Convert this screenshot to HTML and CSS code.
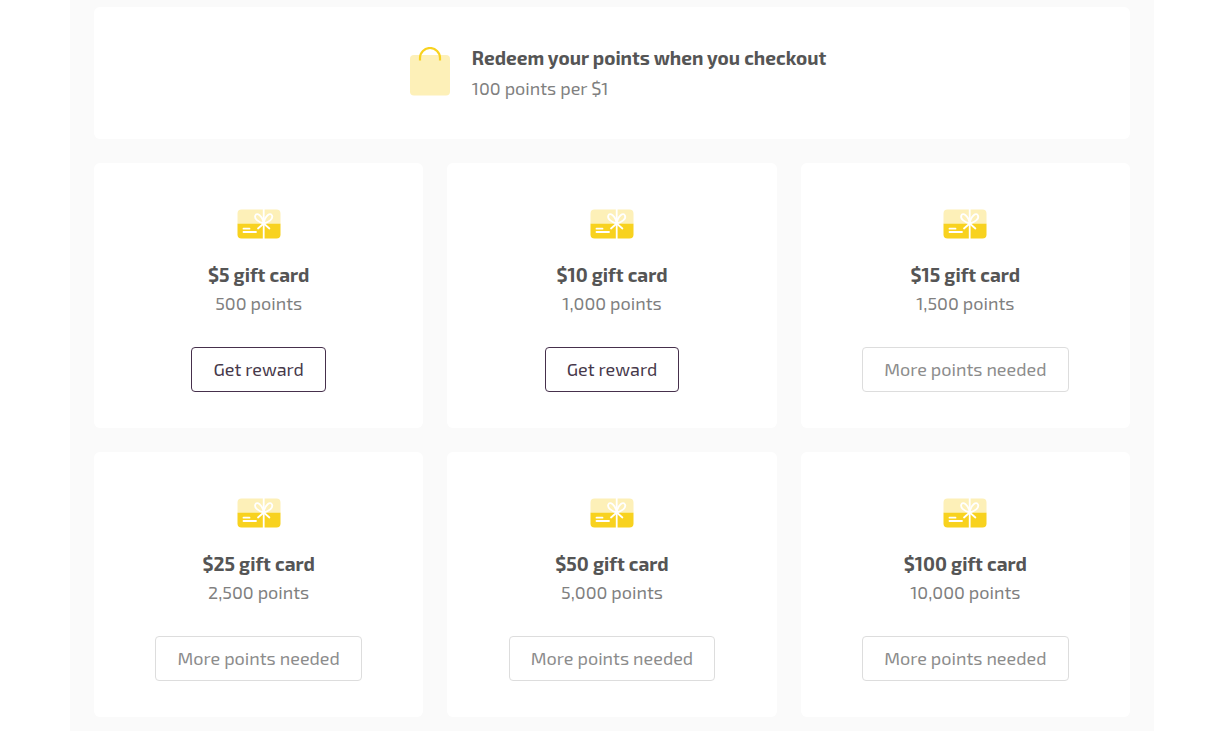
FILE: index.html
```html
<!DOCTYPE html>
<html lang="en">

<head>
  <meta charset="UTF-8">
  <meta name="viewport" content="width=device-width, initial-scale=1">
  <title>Rewards</title>
  <link rel="stylesheet" href="styles.css">
</head>

<body>

  <!-- shared gift card icon -->
  <svg class="sprite" aria-hidden="true">
    <symbol id="gift-card" viewBox="0 0 44 30">
      <path d="M4.500 .5h35a4 4 0 0 1 4 4V15H.5V4.500a4 4 0 0 1 4-4z" fill="#fdf0b8" />
      <path d="M.5 14.700h43v10.800a4 4 0 0 1-4 4h-35a4 4 0 0 1-4-4z" fill="#f8d21f" />
      <g fill="none" stroke="#fff" stroke-width="1.800" stroke-linecap="round" stroke-linejoin="round">
        <path d="M26.700 0v30" stroke-linecap="butt" />
        <path d="M26.700 14.500C22 13.500 17 10 18.300 6.500S25.700 6.500 26.700 14.500C27.700 6.500 33.500 3 35 6.500S31.500 13.500 26.700 14.500" />
        <path d="M26.700 14.500l-5.700 5M26.700 14.500l5.700 5" />
        <path d="M6.500 19.700h6M6.500 23h12.500" />
      </g>
    </symbol>
  </svg>

  <main class="rewards">
    <section class="card banner">
      <svg class="bag" viewBox="0 -1 40 52" aria-hidden="true">
        <rect y="7" width="40" height="40.500" rx="4" fill="#fdf0b8" />
        <path d="M10 12.500V10a10 10 0 0 1 20 0v2.500" fill="none" stroke="#f8d21f" stroke-width="2.200" />
      </svg>
      <div>
        <h2 class="title">Redeem your points when you checkout</h2>
        <p class="points">100 points per $1</p>
      </div>
    </section>

    <div class="grid">
      <section class="card reward">
        <svg class="icon" aria-hidden="true"><use href="#gift-card" /></svg>
        <h2 class="title">$5 gift card</h2>
        <p class="points">500 points</p>
        <button class="btn" type="button">Get reward</button>
      </section>
      <section class="card reward">
        <svg class="icon" aria-hidden="true"><use href="#gift-card" /></svg>
        <h2 class="title">$10 gift card</h2>
        <p class="points">1,000 points</p>
        <button class="btn" type="button">Get reward</button>
      </section>
      <section class="card reward">
        <svg class="icon" aria-hidden="true"><use href="#gift-card" /></svg>
        <h2 class="title">$15 gift card</h2>
        <p class="points">1,500 points</p>
        <button class="btn" type="button" disabled>More points needed</button>
      </section>
      <section class="card reward">
        <svg class="icon" aria-hidden="true"><use href="#gift-card" /></svg>
        <h2 class="title">$25 gift card</h2>
        <p class="points">2,500 points</p>
        <button class="btn" type="button" disabled>More points needed</button>
      </section>
      <section class="card reward">
        <svg class="icon" aria-hidden="true"><use href="#gift-card" /></svg>
        <h2 class="title">$50 gift card</h2>
        <p class="points">5,000 points</p>
        <button class="btn" type="button" disabled>More points needed</button>
      </section>
      <section class="card reward">
        <svg class="icon" aria-hidden="true"><use href="#gift-card" /></svg>
        <h2 class="title">$100 gift card</h2>
        <p class="points">10,000 points</p>
        <button class="btn" type="button" disabled>More points needed</button>
      </section>
    </div>
  </main>

</body>

</html>
```
FILE: styles.css
```css
* {
  box-sizing: border-box;
}

body {
  margin: 0;
  background: #fff;
  font-family: "Exo 2", "Noto Sans", sans-serif;
  font-size: 18px;
  line-height: 28px;
}

.sprite {
  display: none;
}

.rewards {
  min-height: 100vh;
  margin: 0 54px 0 70px;
  padding: 7px 24px 13px;
  background: #fafafa;
}

.card {
  background: #fff;
  border-radius: 6px;
}

.banner {
  display: flex;
  align-items: center;
  justify-content: center;
  gap: 22px;
  margin-bottom: 24px;
  padding: 37px 24px 37px 36px;
}

.bag {
  width: 40px;
  height: 52px;
}

.grid {
  display: grid;
  grid-template-columns: repeat(3, 1fr);
  gap: 24px;
}

.reward {
  display: flex;
  flex-direction: column;
  align-items: center;
  padding: 46px 16px 36px;
  text-align: center;
}

.icon {
  width: 44px;
  height: 30px;
  margin-bottom: 22px;
}

.title {
  margin: 0;
  color: #555;
  font-size: 19px;
  font-weight: 700;
}

.banner .title {
  margin-bottom: 2px;
}

.points {
  margin: 0;
  color: #808080;
}

.btn {
  height: 45px;
  margin-top: 30px;
  padding: 0 21px 2px;
  border: 1px solid #46304c;
  border-radius: 4px;
  background: #fff;
  color: #46384a;
  font: inherit;
}

.btn:disabled {
  border-color: #ddd;
  color: #8c8c8c;
}
```
